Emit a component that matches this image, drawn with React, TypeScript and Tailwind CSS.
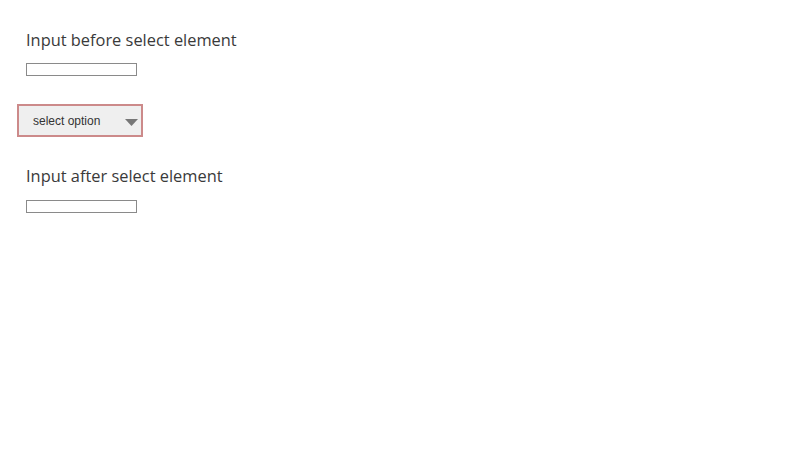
import React from "react";

export default function App() {
  return (
    <div className="min-h-screen w-full bg-white font-['Open_Sans',sans-serif] text-[#3a3a3a]">
      <div className="flex flex-col items-start pl-[26px] pt-[29px]">
        <h3 className="text-[16.4px] leading-[22px] font-normal">Input before select element</h3>
        <input
          type="text"
          className="mt-[12px] h-[13px] w-[111px] border border-[#8a8a8a] bg-white p-0 outline-none"
        />

        {/* custom select */}
        <div className="relative ml-[-9px] mt-[28px] h-[33px] w-[126px] border-2 border-[#cc8a8a] bg-[#efefef]">
          <div className="flex h-full items-center pl-[14px] pt-[1px] font-['Liberation_Sans',Arial,sans-serif] text-[12px] text-[#333]">
            select option
          </div>
          <svg className="absolute right-[3px] top-[13px]" width="13" height="7" viewBox="0 0 13 7">
            <polygon points="0,0 13,0 6.5,7" fill="#777" />
          </svg>
        </div>

        <h3 className="mt-[28px] text-[16.4px] leading-[22px] font-normal">Input after select element</h3>
        <input
          type="text"
          className="mt-[13px] h-[13px] w-[111px] border border-[#8a8a8a] bg-white p-0 outline-none"
        />
      </div>
    </div>
  );
}
